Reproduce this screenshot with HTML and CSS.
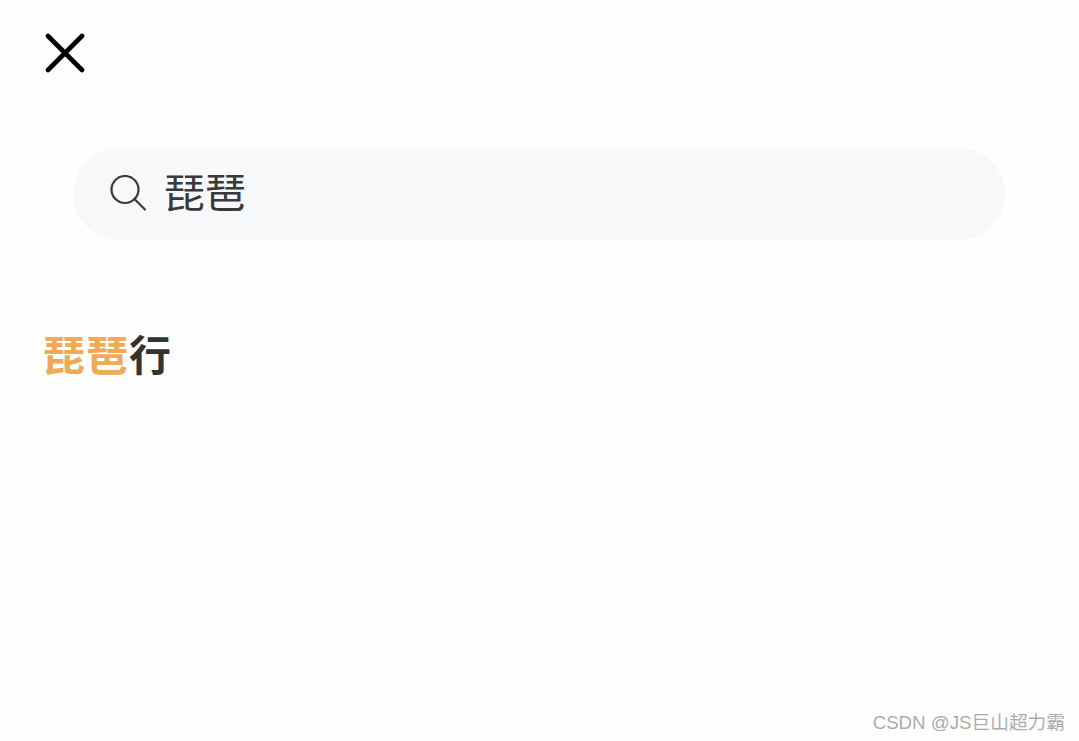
FILE: index.html
```
<!DOCTYPE html>
<html lang="zh-CN">
<head>
<meta charset="utf-8">
<title>搜索</title>
<link rel="stylesheet" href="styles.css">
</head>
<body>
<main class="page">
  <button class="close" aria-label="关闭">
    <svg viewBox="0 0 40 40" width="40" height="40"><path d="M3 3 L37 37 M37 3 L3 37" fill="none" stroke="#000" stroke-width="4.600" stroke-linecap="round"/></svg>
  </button>
  <div class="search">
    <svg class="search-icon" viewBox="0 0 36 36" width="36" height="36"><circle cx="15" cy="14.500" r="13.500" fill="none" stroke="#3a3a3c" stroke-width="2.200"/><path d="M24.500 24 L35 34.500" fill="none" stroke="#3a3a3c" stroke-width="2.200" stroke-linecap="round"/></svg>
    <span class="query">琵琶</span>
  </div>
  <p class="result"><span class="hit">琵琶</span>行</p>
</main>
<span class="watermark">CSDN @JS巨山超力霸</span>
</body>
</html>
```
FILE: styles.css
```
html, body {
  margin: 0;
  height: 100%;
  background: #fefefe;
  overflow: hidden;
}
body {
  position: relative;
  font-family: "Noto Sans CJK SC", "Noto Sans", sans-serif;
}
.page {
  display: flex;
  flex-direction: column;
  align-items: flex-start;
  padding: 33px 0 0 45px;
}
.close {
  display: block;
  width: 40px;
  height: 40px;
  padding: 0;
  border: 0;
  background: none;
}
.close svg { display: block; }
.search {
  display: flex;
  align-items: center;
  box-sizing: border-box;
  width: 932px;
  height: 92px;
  margin: 75px 0 0 28px;
  padding-left: 37px;
  border-radius: 46px;
  background: #f7f8fa;
}
.search-icon {
  flex: none;
  margin-bottom: 2px;
}
.query {
  margin: 0 0 8px 18px;
  font-size: 41px;
  line-height: 1;
  color: #39393b;
}
.result {
  margin: 88px 0 0 -2px;
  font-size: 42px;
  line-height: 50px;
  font-weight: 700;
  letter-spacing: 1px;
  color: #333;
}
.hit { color: #eeaa57; }
.watermark {
  position: absolute;
  right: 14px;
  bottom: 6px;
  font-family: "Liberation Sans", "Noto Sans CJK SC", sans-serif;
  font-size: 18.700px;
  line-height: 24px;
  color: #acacac;
}
```
